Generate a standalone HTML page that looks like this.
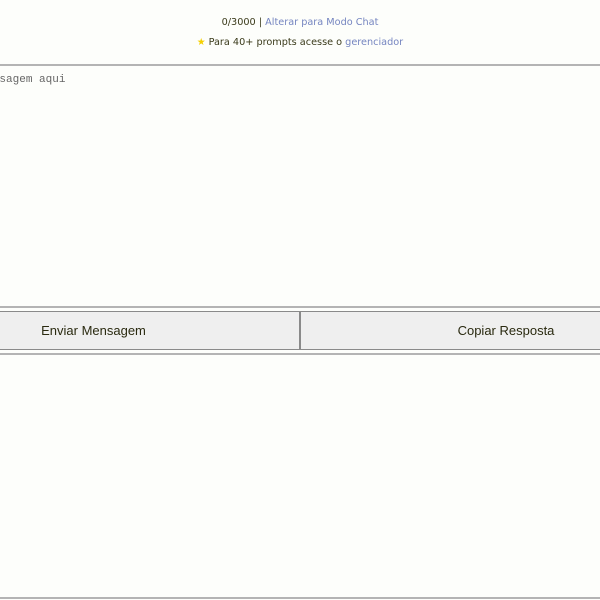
<!DOCTYPE html>
<html><head><meta charset="utf-8"><style>
html,body{margin:0;padding:0;width:600px;height:600px;overflow:hidden;background:#fdfefb;font-family:"DejaVu Sans","Liberation Sans",sans-serif;}
#w{position:relative;width:600px;height:600px;overflow:hidden;}
.t{position:absolute;left:0;width:600px;text-align:center;font-size:9.7px;color:#3a3a1a;}
a{color:#7585c0;text-decoration:none}
.box{position:absolute;left:-120px;width:740px;border-top:2px solid #b4b4b4;border-bottom:2px solid #b4b4b4;background:#fdfefb;}
.btn{position:absolute;top:311px;height:39px;background:#efefef;border:1px solid #8a8a8a;box-sizing:border-box;font-family:"Liberation Sans",sans-serif;font-size:13px;color:#2a2a10;line-height:37px;text-align:center;}
</style></head><body><div id="w">
<div class="t" style="top:17px">0/3000 | <a>Alterar para Modo Chat</a></div>
<div class="t" style="top:37px"><span style="color:#f5d000">★</span> Para 40+ prompts acesse o <a>gerenciador</a></div>
<div class="box" style="top:64px;height:240px"></div>
<div style="position:absolute;left:-93px;top:74px;font-family:'Liberation Mono',monospace;font-size:11px;color:#666;white-space:nowrap">Digite sua mensagem aqui</div>
<div class="btn" style="left:-112px;width:412px;border-left:none">Enviar Mensagem</div>
<div class="btn" style="left:300px;width:412px">Copiar Resposta</div>
<div class="box" style="top:353px;height:242px"></div>
</div></body></html>
